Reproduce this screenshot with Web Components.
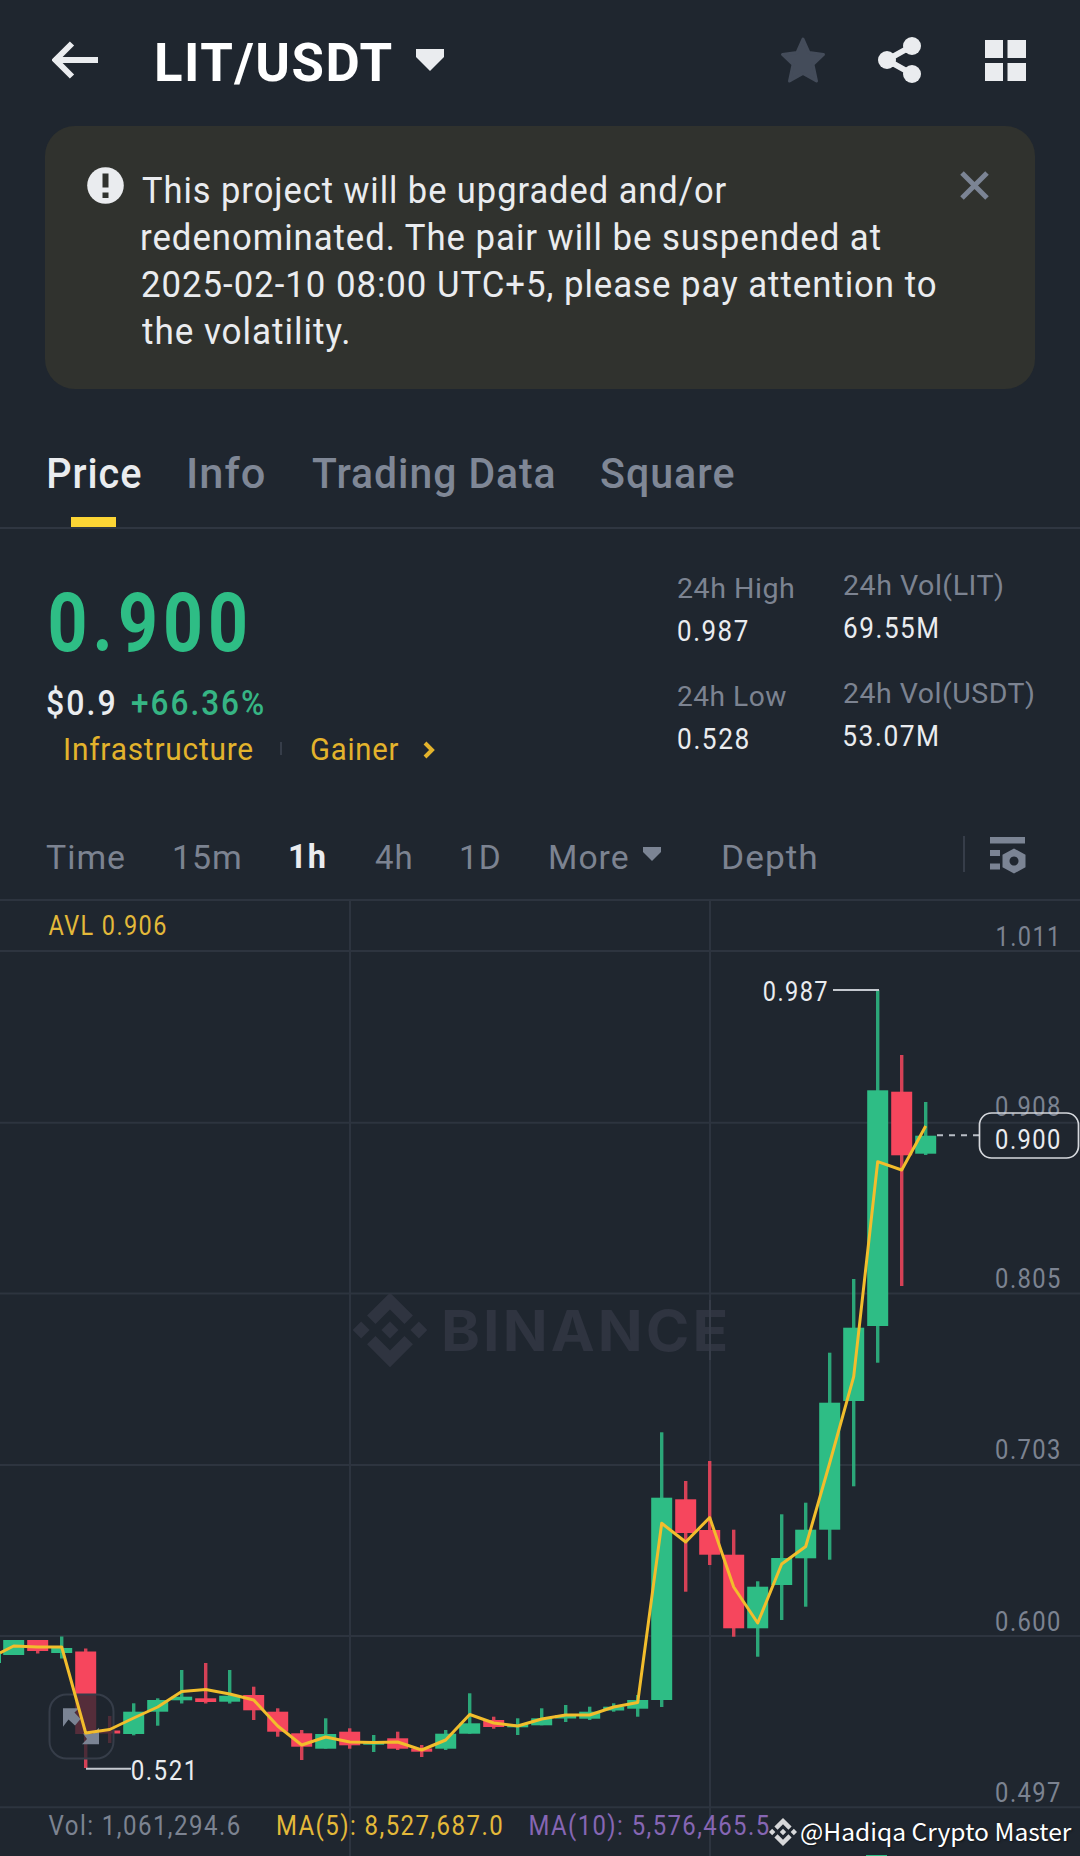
<!DOCTYPE html>
<html lang="en">
<head>
<meta charset="utf-8">
<title>LIT/USDT</title>
<style>
    html, body {
        margin: 0;
        padding: 0;
        background: #1f262f;
    }
    body {
        width: 1080px;
        height: 1856px;
        overflow: hidden;
        font-family: Roboto, "Liberation Sans", sans-serif;
        color: #eaecef;
    }
</style>
</head>
<body>
<pair-page></pair-page>

<script>
const measureCtx = document.createElement('canvas').getContext('2d');

// Returns where the ink of a text starts and how wide it is
function inkOf(text, font, spacing = 0) {
    measureCtx.font = font;
    const m = measureCtx.measureText(text);
    return {
        left: -m.actualBoundingBoxLeft,
        width: m.actualBoundingBoxLeft + m.actualBoundingBoxRight + spacing * (text.length - 1)
    };
}

const LOGO = `
    <polygon points="38.7,53.2 63.3,28.6 87.9,53.2 102.2,38.9 63.3,0 24.4,38.9"/>
    <polygon points="38.7,73.4 63.3,98 87.9,73.4 102.2,87.7 63.3,126.6 24.4,87.7"/>
    <polygon points="0,63.3 14.3,49 28.6,63.3 14.3,77.6"/>
    <polygon points="98,63.3 112.3,49 126.6,63.3 112.3,77.6"/>
    <polygon points="63.3,48.8 77.8,63.3 63.3,77.8 48.8,63.3"/>`;

// Text squeezed or stretched to a given width: <fit-text w="120">Label</fit-text>
class FitText extends HTMLElement {
    constructor() {
        super();
        this.attachShadow({ mode: 'open' });
        this.shadowRoot.innerHTML = `
            <style>
                :host { display: block; flex: none; white-space: nowrap; }
                span { display: inline-block; transform-origin: 0 50%; }
            </style>
            <span><slot></slot></span>
        `;
    }

    connectedCallback() {
        const w = Number(this.getAttribute('w'));
        const cs = getComputedStyle(this);
        const spacing = parseFloat(cs.letterSpacing) || 0;
        const ink = inkOf(this.textContent, `${cs.fontWeight} ${cs.fontSize} ${cs.fontFamily}`, spacing);
        const s = w / ink.width;
        this.style.width = w + 'px';
        this.shadowRoot.querySelector('span').style.transform = `translateX(${-ink.left * s}px) scaleX(${s})`;
    }
}

class PairHeader extends HTMLElement {
    constructor() {
        super();
        this.attachShadow({ mode: 'open' });
        this.shadowRoot.innerHTML = `
            <style>
                :host {
                    display: flex;
                    align-items: center;
                    box-sizing: border-box;
                    height: 120px;
                    padding: 0 54px 0 52px;
                }
                svg { display: block; flex: none; fill: #eaecef; }
                fit-text {
                    margin: 5px 24px 0 59px;
                    font-size: 53.5px;
                    line-height: 60px;
                    font-weight: 700;
                    letter-spacing: 1.5px;
                    color: #fff;
                }
                .star { margin-left: auto; fill: #444c5a; }
                .share { margin-left: 52px; }
                .grid { margin-left: 64.5px; }
            </style>
            <svg width="46" height="38" viewBox="0 0 46 38"><path d="M3.5 19H46M20 2.5 3.5 19 20 35.5" fill="none" stroke="#eaecef" stroke-width="6"/></svg>
            <fit-text w="235">LIT/USDT</fit-text>
            <svg width="28" height="22" viewBox="0 0 28 22"><path d="M0 0H28V8L14 22 0 8Z"/></svg>
            <svg class="star" width="46" height="48" viewBox="0 0 46 48"><path d="M23 3 29 16.500 43.500 18.500 33 28.500 36.500 45 23 37.500 9.500 45 13 28.500 2.500 18.500 17 16.500Z" stroke="#444c5a" stroke-width="3" stroke-linejoin="round"/></svg>
            <svg class="share" width="43" height="46" viewBox="0 0 43 46"><path d="M34 9 9 23 34 37" fill="none" stroke="#eaecef" stroke-width="6"/><circle cx="34" cy="9" r="9"/><circle cx="9" cy="23" r="9"/><circle cx="34" cy="37" r="9"/></svg>
            <svg class="grid" width="41" height="41" viewBox="0 0 41 41"><path d="M0 0H18V18H0ZM22.500 0H41V18H22.500ZM0 23H18V41H0ZM22.500 23H41V41H22.500Z"/></svg>
        `;
    }
}

class PairNotice extends HTMLElement {
    constructor() {
        super();
        this.attachShadow({ mode: 'open' });
        this.shadowRoot.innerHTML = `
            <style>
                :host {
                    display: flex;
                    align-items: flex-start;
                    box-sizing: border-box;
                    height: 263px;
                    margin: 6px 45px 0;
                    padding: 40px 46px 0 42px;
                    border-radius: 30px;
                    background: #30322e;
                    font-size: 36px;
                    line-height: 47px;
                    letter-spacing: 1px;
                }
                svg { display: block; flex: none; }
                .mark { margin-top: 1px; }
                .close { margin: 5px 0 0 auto; }
                .text { margin: 2px 0 0 18px; }
            </style>
            <svg class="mark" width="37" height="37" viewBox="0 0 37 37"><circle cx="18.500" cy="18.500" r="18.300" fill="#eaecef"/><path d="M15.500 6.500H21.500V20.500H15.500ZM15.500 25.500H21.500V31H15.500Z" fill="#30322e"/></svg>
            <div class="text"><slot></slot></div>
            <svg class="close" width="29" height="29" viewBox="0 0 29 29"><path d="M2 2 27 27M27 2 2 27" stroke="#7b8494" stroke-width="5"/></svg>
        `;
    }
}

class PairTabs extends HTMLElement {
    constructor() {
        super();
        this.attachShadow({ mode: 'open' });
        this.shadowRoot.innerHTML = `
            <style>
                :host {
                    display: flex;
                    align-items: flex-start;
                    gap: 47px;
                    box-sizing: border-box;
                    height: 140px;
                    padding: 60px 49px 0;
                    border-bottom: 2px solid #2f3641;
                    font-size: 42px;
                    line-height: 50px;
                    font-weight: 500;
                    letter-spacing: 1px;
                    color: #7f8796;
                }
                .active { margin-right: 1px; color: #eaecef; }
                .bar {
                    width: 45px;
                    height: 10px;
                    margin: 18px 0 0 22px;
                    background: #fcd535;
                }
            </style>
            <div class="active"><fit-text w="92">Price</fit-text><div class="bar"></div></div>
            <fit-text w="75.500">Info</fit-text>
            <fit-text w="242">Trading Data</fit-text>
            <fit-text w="133">Square</fit-text>
        `;
    }
}

class PairStat extends HTMLElement {
    constructor() {
        super();
        this.attachShadow({ mode: 'open' });
        this.shadowRoot.innerHTML = `
            <style>
                :host { display: block; height: 108px; font-size: 28.5px; line-height: 30px; }
                .label { color: #7c8391; letter-spacing: .5px; }
                .value { margin-top: 12px; font-size: 29px; letter-spacing: 1.7px; }
            </style>
            <fit-text class="label" w="${this.getAttribute('lw')}">${this.getAttribute('label')}</fit-text>
            <fit-text class="value" w="${this.getAttribute('vw')}">${this.getAttribute('value')}</fit-text>
        `;
    }
}

class PairTicker extends HTMLElement {
    constructor() {
        super();
        this.attachShadow({ mode: 'open' });
        this.shadowRoot.innerHTML = `
            <style>
                :host {
                    display: flex;
                    justify-content: space-between;
                    box-sizing: border-box;
                    height: 291px;
                    padding: 0 47.500px 0 46.500px;
                }
                .price {
                    margin: 54px 0 0 3.500px;
                    font-size: 82px;
                    line-height: 80px;
                    font-weight: 700;
                    letter-spacing: 6px;
                    color: #2ebd85;
                }
                .row { display: flex; }
                .fiat {
                    gap: 18px;
                    margin-top: 21px;
                    font-size: 35px;
                    line-height: 40px;
                    font-weight: 500;
                    letter-spacing: 2.200px;
                }
                .up { color: #36b584; }
                .tags {
                    align-items: center;
                    margin: 11px 0 0 18px;
                    font-size: 30.5px;
                    line-height: 30px;
                    letter-spacing: .8px;
                    color: #e3b32c;
                }
                .tags i { width: 2px; height: 13px; margin: 0 28.500px 3px 27.500px; background: #363d49; }
                .tags svg { margin-left: 25px; }
                .stats { display: grid; grid-template-columns: 166px 189px; }
                .left { padding-top: 45px; }
                .right { padding-top: 42px; }
            </style>
            <div>
                <fit-text class="price" w="195.500">0.900</fit-text>
                <div class="row fiat">
                    <fit-text w="67">$0.9</fit-text>
                    <fit-text class="up" w="131.500">+66.36%</fit-text>
                </div>
                <div class="row tags">
                    <fit-text w="188">Infrastructure</fit-text><i></i>
                    <fit-text w="87">Gainer</fit-text>
                    <svg width="12" height="18" viewBox="0 0 12 18"><path d="M2 2 9 9 2 16" fill="none" stroke="#e3b32c" stroke-width="4"/></svg>
                </div>
            </div>
            <div class="stats">
                <div class="left">
                    <pair-stat label="24h High" lw="115" value="0.987" vw="70"></pair-stat>
                    <pair-stat label="24h Low" lw="108" value="0.528" vw="70"></pair-stat>
                </div>
                <div class="right">
                    <pair-stat label="24h Vol(LIT)" lw="158" value="69.55M" vw="93"></pair-stat>
                    <pair-stat label="24h Vol(USDT)" lw="189" value="53.07M" vw="93"></pair-stat>
                </div>
            </div>
        `;
    }
}

class ChartIntervals extends HTMLElement {
    constructor() {
        super();
        this.attachShadow({ mode: 'open' });
        this.shadowRoot.innerHTML = `
            <style>
                :host {
                    display: flex;
                    align-items: flex-start;
                    gap: 50px;
                    box-sizing: border-box;
                    height: 79px;
                    padding: 17px 54px 0 46px;
                    font-size: 34px;
                    line-height: 40px;
                    letter-spacing: 1px;
                    color: #7c8391;
                }
                .active { color: #eaecef; font-weight: 700; margin-top: -1px; }
                .more { display: flex; gap: 16px; margin-right: 12px; }
                .more svg { margin-top: 10px; }
                .tools { display: flex; gap: 25px; margin-left: auto; }
                .tools i { width: 2px; height: 36px; margin-top: -1px; background: #363d49; }
            </style>
            <fit-text w="78">Time</fit-text>
            <fit-text w="66">15m</fit-text>
            <fit-text w="35" class="active">1h</fit-text>
            <fit-text w="36">4h</fit-text>
            <fit-text w="38.500">1D</fit-text>
            <div class="more">
                <fit-text w="77.500">More</fit-text>
                <svg width="18" height="14" viewBox="0 0 18 14"><path d="M0 0H18V5L9 14 0 5Z" fill="#7b8494"/></svg>
            </div>
            <fit-text w="93">Depth</fit-text>
            <div class="tools">
                <i></i>
                <svg width="36" height="38" viewBox="0 -1 36 38" fill="#7b8494">
                    <path d="M0 -1H35V5.500H0ZM0 12H10V18H0ZM0 25.500H10V31.500H0Z"/>
                    <path fill-rule="evenodd" d="M24 10.500 35.500 16.800V29.200L24 35.500 12.500 29.200V16.800ZM24 18.500a4.500 4.500 0 1 0 .01 0Z"/>
                </svg>
            </div>
        `;
    }
}

// One row per hour: direction, wick top, body top, body bottom, wick bottom, average line
const CANDLES = [
    ['up', 1640, 1640, 1655, 1655, 1646],
    ['down', 1640, 1640, 1651, 1653.5, 1647],
    ['up', 1636.5, 1648, 1653, 1658.5, 1647],
    ['down', 1648.5, 1651.5, 1734, 1768, 1733],
    ['down', 1716, 1730.5, 1733.5, 1743, 1729.5],
    ['up', 1703.3, 1711.7, 1734, 1735.3, 1718],
    ['up', 1698.3, 1700, 1711.7, 1725.7, 1707],
    ['up', 1670, 1696.7, 1700.3, 1703.5, 1691.5],
    ['down', 1663, 1698.3, 1702, 1703.5, 1689.5],
    ['up', 1670, 1695.7, 1701.7, 1703.5, 1694],
    ['down', 1686.7, 1695, 1710.3, 1720, 1700],
    ['down', 1708.3, 1711.7, 1731.7, 1736.7, 1726],
    ['down', 1730, 1733.3, 1746.7, 1760, 1745],
    ['up', 1718.3, 1734, 1748.7, 1748.7, 1737],
    ['down', 1728.3, 1731.7, 1745.3, 1748.7, 1742],
    ['up', 1735, 1741.3, 1744.7, 1752, 1742.5],
    ['down', 1731.7, 1738.3, 1748.7, 1750, 1742],
    ['down', 1745, 1748.5, 1751.7, 1757, 1750],
    ['up', 1730, 1733.7, 1748.7, 1750, 1740],
    ['up', 1693.3, 1723.3, 1733.7, 1733.7, 1714.5],
    ['down', 1716.7, 1720, 1727, 1728.7, 1723],
    ['up', 1718.3, 1724.3, 1727.3, 1735, 1726],
    ['up', 1708.3, 1718.3, 1725.3, 1725.3, 1719],
    ['up', 1705, 1715, 1718.5, 1722, 1715],
    ['up', 1706.7, 1711.7, 1718.7, 1720, 1715],
    ['up', 1703.3, 1706.7, 1710.5, 1711.7, 1707],
    ['up', 1695, 1700, 1708.7, 1716.7, 1702.5],
    ['up', 1432.3, 1497.7, 1700, 1707, 1523.3],
    ['down', 1481, 1499.3, 1533, 1591.7, 1542],
    ['down', 1461, 1530, 1554.7, 1565, 1517.5],
    ['down', 1529.7, 1554.7, 1628.3, 1636.7, 1587],
    ['up', 1581.3, 1586.7, 1628.3, 1656.7, 1623],
    ['up', 1514.3, 1558, 1585, 1620, 1564],
    ['up', 1502.7, 1529.7, 1558.3, 1606.7, 1546.5],
    ['up', 1352.7, 1402.7, 1529.7, 1559.7, 1463],
    ['up', 1279, 1327.7, 1401, 1486.3, 1376.7],
    ['up', 990, 1090.3, 1326, 1362.7, 1161.7],
    ['down', 1055, 1091.7, 1155.3, 1286, 1170],
    ['up', 1102, 1135.7, 1153.7, 1155, 1126]
];

// text, left, width, baseline, class
const LABELS = [
    ['AVL 0.906', 48.5, 117, 934.7, 'gold'],
    ['1.011', 997.3, 58.5, 945.7, 'axis'],
    ['0.908', 996, 63.5, 1116, 'axis'],
    ['0.805', 996, 63.5, 1288, 'axis'],
    ['0.703', 996, 63.5, 1459.3, 'axis'],
    ['0.600', 996, 63.5, 1631, 'axis'],
    ['0.497', 996, 63.5, 1801.7, 'axis'],
    ['0.987', 763.7, 63, 1000.7, 'bright'],
    ['0.521', 131.7, 61, 1779.7, 'bright'],
    ['0.900', 996, 63.5, 1148.7, 'bright'],
    ['Vol: 1,061,294.6', 48.5, 190.8, 1834.7, 'axis'],
    ['MA(5): 8,527,687.0', 277.7, 224, 1834.7, 'gold'],
    ['MA(10): 5,576,465.5', 530.3, 238, 1834.7, 'violet']
];

class CandleChart extends HTMLElement {
    constructor() {
        super();
        this.attachShadow({ mode: 'open' });
        const x = i => 13.7 + 24 * i;
        const color = { up: '#2ebd85', down: '#f6465d' };

        const candles = CANDLES.map(([dir, high, top, bottom, low], i) => `
            <g fill="${color[dir]}">
                <rect x="${x(i) - 1.7}" y="${high}" width="3.4" height="${low - high}" opacity=".85"/>
                <rect x="${x(i) - 10.5}" y="${top}" width="21" height="${bottom - top}"/>
            </g>`).join('');
        const line = '0,1653 ' + CANDLES.map((c, i) => `${x(i)},${c[5]}`).join(' ');
        const rows = [900, 951, 1122.7, 1293.5, 1465, 1636, 1807.3].map(y => `M0 ${y}H1080`).join('');

        const labels = LABELS.map(([text, left, width, y, cls]) => this.label(text, left, width, y, cls, '400 26.8px Roboto', 1.6)).join('');

        this.shadowRoot.innerHTML = `
            <style>
                :host { display: block; height: 957px; }
                svg { display: block; }
                text { font: 400 26.8px Roboto, "Liberation Sans", sans-serif; }
                .axis { fill: #7c8391; }
                .gold { fill: #e3b93a; }
                .bright { fill: #eaecef; }
                .violet { fill: #8666b4; }
                .brand { fill: #2f3440; font: 700 57px Inter, sans-serif; }
            </style>
            <svg width="1080" height="957" viewBox="0 899 1080 957">
                <path d="${rows}M350 900V1856M710 900V1856" fill="none" stroke="#2d343f" stroke-width="2"/>
                <g fill="#2f3440" transform="translate(352.700 1292.700) scale(.589)">${LOGO}</g>
                ${this.label('BINANCE', 444, 281.7, 1350.7, 'brand', '700 57px Inter', 3)}
                <path d="M710 1300V1360" stroke="#363c48" stroke-width="2"/>
                <rect x="-1" y="1653" width="2" height="10" fill="#2ebd85"/>
                ${candles}
                <rect x="866" y="1855" width="21" height="1" fill="#2ebd85"/>
                <rect x="49.500" y="1694.500" width="64" height="64" rx="17" fill="#1f262f" fill-opacity=".75" stroke="#363d49" stroke-width="2"/>
                <path d="M63 1708.300H79L74.500 1712.500 80.500 1719 75 1725.500 68.500 1719.500 63 1726.700ZM99 1727.700V1744.300H82L87 1739 83 1733.500H93Z" fill="#7b8494"/>
                <polyline points="${line}" fill="none" stroke="#f2bd2c" stroke-width="3" stroke-linejoin="round"/>
                <path d="M833 990H879M86 1768.700H131" stroke="#c4c8cf" stroke-width="2"/>
                <path d="M937 1135.300H979" stroke="#b9bec6" stroke-width="2" stroke-dasharray="6 6"/>
                ${labels}
                <rect x="979.500" y="1113" width="99" height="45" rx="12" fill="none" stroke="#d5d8dd" stroke-width="1.700"/>
            </svg>
        `;
    }

    label(text, left, width, y, cls, font, spacing) {
        const ink = inkOf(text, font, spacing);
        const s = width / ink.width;
        return `<text class="${cls}" letter-spacing="${spacing}" transform="translate(${left - ink.left * s} ${y}) scale(${s} 1)">${text}</text>`;
    }
}

class AuthorBadge extends HTMLElement {
    constructor() {
        super();
        this.attachShadow({ mode: 'open' });
        this.shadowRoot.innerHTML = `
            <style>
                :host {
                    position: absolute;
                    right: 8px;
                    bottom: 7px;
                    display: flex;
                    align-items: center;
                    gap: 4px;
                    font: 400 24px/36px "Noto Sans CJK SC", sans-serif;
                    color: #fff;
                    text-shadow: 1px 1px 2px rgba(0, 0, 0, .5);
                }
                svg { display: block; margin-top: 1px; }
            </style>
            <svg width="28" height="28" viewBox="0 0 126.600 126.600" fill="#d6d7d9">${LOGO}</svg>
            <fit-text w="271">@Hadiqa Crypto Master</fit-text>
        `;
    }
}

class PairPage extends HTMLElement {
    constructor() {
        super();
        this.attachShadow({ mode: 'open' });
        this.shadowRoot.innerHTML = `
            <style>
                :host {
                    position: relative;
                    display: flex;
                    flex-direction: column;
                    width: 1080px;
                    height: 1856px;
                    overflow: hidden;
                }
            </style>
            <pair-header></pair-header>
            <pair-notice>
                <fit-text w="584">This project will be upgraded and/or</fit-text>
                <fit-text w="739">redenominated. The pair will be suspended at</fit-text>
                <fit-text w="793">2025-02-10 08:00 UTC+5, please pay attention to</fit-text>
                <fit-text w="206">the volatility.</fit-text>
            </pair-notice>
            <pair-tabs></pair-tabs>
            <pair-ticker></pair-ticker>
            <chart-intervals></chart-intervals>
            <candle-chart></candle-chart>
            <author-badge></author-badge>
        `;
    }
}

customElements.define('fit-text', FitText);
customElements.define('pair-header', PairHeader);
customElements.define('pair-notice', PairNotice);
customElements.define('pair-tabs', PairTabs);
customElements.define('pair-stat', PairStat);
customElements.define('pair-ticker', PairTicker);
customElements.define('chart-intervals', ChartIntervals);
customElements.define('candle-chart', CandleChart);
customElements.define('author-badge', AuthorBadge);
customElements.define('pair-page', PairPage);
</script>
</body>
</html>
